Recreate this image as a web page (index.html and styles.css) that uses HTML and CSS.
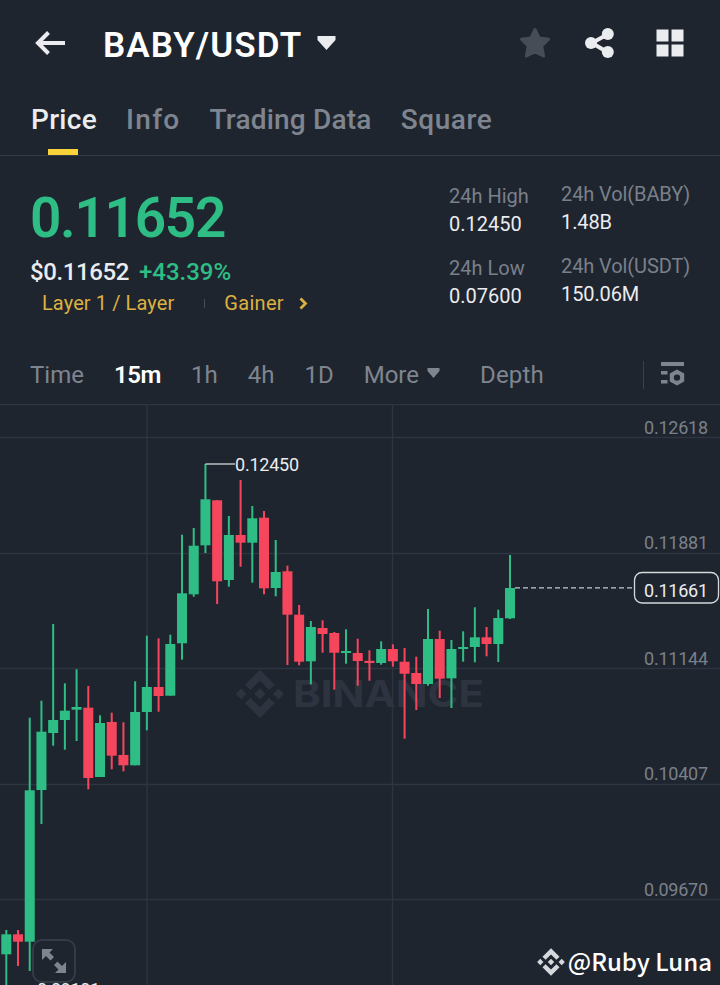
FILE: index.html
```html
<!DOCTYPE html>
<html lang="en">
<head>
    <meta charset="UTF-8">
    <meta name="viewport" content="width=device-width, initial-scale=1.0">
    <title>BABY/USDT</title>
    <link rel="stylesheet" href="styles.css">
</head>
<body>

    <header class="header">
        <svg class="back" width="32" height="26" viewBox="0 0 32 26">
            <path d="M14.5 2.5 L4 13 L14.5 23.5 M4 13 H31" fill="none" stroke="#eaecef" stroke-width="4"/>
        </svg>
        <h1 class="pair">BABY/USDT</h1>
        <svg class="pair-caret" width="19" height="14" viewBox="0 0 19 14">
            <path d="M0.5 0 H18.5 V4 L9.5 14 L0.5 4 Z" fill="#eaecef"/>
        </svg>
        <div class="actions">
            <svg width="32" height="32" viewBox="0 0 32 32">
                <path d="M16 2.5 L20 11 L29.5 12.3 L22.7 19 L24.6 29 L16 25 L7.4 29 L9.3 19 L2.5 12.3 L12 11 Z" fill="#474d57" stroke="#474d57" stroke-width="3" stroke-linejoin="round"/>
            </svg>
            <svg width="30" height="32" viewBox="0 0 30 32">
                <path d="M23 7 L7 16 L23 25.5" fill="none" stroke="#eaecef" stroke-width="4"/>
                <circle cx="22.8" cy="7" r="6" fill="#eaecef"/>
                <circle cx="6" cy="16" r="6" fill="#eaecef"/>
                <circle cx="22.8" cy="25" r="6" fill="#eaecef"/>
            </svg>
            <svg width="28" height="28" viewBox="0 0 28 28">
                <path d="M0.5 0.5 h12 v12 h-12 z M15.5 0.5 h12 v12 h-12 z M0.5 15.5 h12 v12 h-12 z M15.5 15.5 h12 v12 h-12 z" fill="#eaecef"/>
            </svg>
        </div>
    </header>

    <nav class="tabs">
        <div class="tab price active">Price</div>
        <div class="tab info">Info</div>
        <div class="tab trading">Trading Data</div>
        <div class="tab square">Square</div>
    </nav>

    <section class="ticker">
        <div class="ticker-main">
            <div class="last-price">0.11652</div>
            <div class="change-row">
                <span class="usd">$0.11652</span>
                <span class="change">+43.39%</span>
            </div>
            <div class="tags">
                <span>Layer 1 / Layer</span>
                <i class="tag-line"></i>
                <span class="gainer">Gainer</span>
                <svg width="9" height="13" viewBox="0 0 9 13">
                    <path d="M1.5 1.5 L6.5 6.5 L1.5 11.5" fill="none" stroke="#dcb140" stroke-width="2.8"/>
                </svg>
            </div>
        </div>
        <div class="stats stats-price">
            <div class="stat">
                <div class="label">24h High</div>
                <div class="value">0.12450</div>
            </div>
            <div class="stat">
                <div class="label">24h Low</div>
                <div class="value">0.07600</div>
            </div>
        </div>
        <div class="stats stats-volume">
            <div class="stat">
                <div class="label">24h Vol(BABY)</div>
                <div class="value">1.48B</div>
            </div>
            <div class="stat">
                <div class="label">24h Vol(USDT)</div>
                <div class="value">150.06M</div>
            </div>
        </div>
    </section>

    <div class="intervals">
        <span>Time</span>
        <span class="selected">15m</span>
        <span>1h</span>
        <span>4h</span>
        <span>1D</span>
        <span class="more">More
            <svg width="13" height="10" viewBox="0 0 13 10">
                <path d="M0.5 0 H12.5 V3 L6.5 10 L0.5 3 Z" fill="#7f858f"/>
            </svg>
        </span>
        <span class="depth">Depth</span>
        <div class="settings">
            <svg width="26" height="26" viewBox="0 0 26 26">
                <path d="M1 1 H24 V5 H1 Z M1 10 H7.5 V13.5 H1 Z M1 19 H7.5 V22.5 H1 Z" fill="#7f858f"/>
                <path d="M17 8.6 L24.2 12.6 V20.6 L17 24.6 L9.8 20.6 V12.6 Z M17 13.4 A3.2 3.2 0 1 0 17 19.8 A3.2 3.2 0 1 0 17 13.4 Z" fill="#7f858f" fill-rule="evenodd"/>
            </svg>
        </div>
    </div>

    <main class="chart">
        <svg class="plot" width="720" height="581" viewBox="0 404 720 581">
            <g class="grid">
                <path d="M0 404.5 H720 M0 437.5 H720 M0 553.5 H720 M0 668.5 H720 M0 784.5 H720 M0 899.5 H720"/>
                <path d="M147 404 V985 M392.5 404 V985"/>
            </g>

            <g class="watermark">
                <g transform="translate(235.5 669.5) scale(0.387)">
                    <path id="logo" d="M38.7 53.2 L63 28.9 L87.3 53.2 L101.4 39.1 L63 0.7 L24.6 39.1 Z M0.7 63 L14.8 48.9 L28.9 63 L14.8 77.1 Z M38.7 72.8 L63 97.1 L87.3 72.8 L101.4 86.9 L63 125.3 L24.6 86.9 Z M97.1 63 L111.2 48.9 L125.3 63 L111.2 77.1 Z M77.4 63 L63 77.4 L48.6 63 L63 48.6 Z"/>
                </g>
                <text x="293" y="707" textLength="191" lengthAdjust="spacingAndGlyphs">BINANCE</text>
            </g>

            <g id="candles"></g>

            <path class="high-line" d="M205.5 464 H235"/>
            <text class="high-label" x="235" y="471" textLength="64">0.12450</text>
            <text class="high-label" x="37" y="996" textLength="63">0.09101</text>

            <g class="axis">
                <text x="644" y="434" textLength="64">0.12618</text>
                <text x="644" y="549" textLength="64">0.11881</text>
                <text x="644" y="665" textLength="64">0.11144</text>
                <text x="644" y="780" textLength="64">0.10407</text>
                <text x="644" y="896" textLength="64">0.09670</text>
            </g>

            <path class="last-line" d="M515 587.8 H634"/>
            <rect class="last-box" x="634.5" y="572.5" width="84" height="30.5" rx="7.5"/>
            <text class="last-label" x="644" y="597" textLength="64">0.11661</text>
        </svg>

        <div class="expand">
            <svg width="26" height="26" viewBox="0 0 26 26">
                <path d="M1 1 H12 L8.5 4.5 L13 9 L9.5 12.5 L5 8 L1 12 Z M25 25 H14 L17.5 21.5 L13 17 L16.5 13.5 L21 18 L25 14 Z" fill="#7f858f"/>
            </svg>
        </div>

        <div class="author">
            <svg width="28" height="28" viewBox="0 0 126 126">
                <use href="#logo" fill="#d5d8dc"/>
            </svg>
            <span>@Ruby Luna</span>
        </div>
    </main>

    <script>
        // [wick top, body top, body bottom, wick bottom, up]
        const candles = [
            [930, 934.3, 954.3, 990, 1],
            [930, 934.3, 941.7, 966, 0],
            [717.7, 790.3, 941.7, 971, 1],
            [700.7, 731.7, 790, 824, 1],
            [624, 720, 733, 745.7, 1],
            [683.3, 710.7, 720, 749.7, 1],
            [669.3, 707, 709.7, 741, 1],
            [686, 707.7, 778, 789.3, 0],
            [715.3, 723, 777, 777, 1],
            [712.7, 722, 755.7, 769.3, 0],
            [722.3, 755, 765.3, 771.3, 0],
            [681.3, 712, 765.3, 765.3, 1],
            [635.7, 687, 712, 730.3, 1],
            [638.3, 687, 696, 711.7, 0],
            [634.7, 644, 695.7, 695.7, 1],
            [534.7, 593.3, 643.3, 659.7, 1],
            [528, 545.7, 594.3, 596.7, 1],
            [464, 499.3, 545.3, 553, 1],
            [500.3, 500.3, 581.3, 604, 0],
            [516, 535, 580, 586.7, 1],
            [480, 535, 542.7, 566.7, 0],
            [506, 518.3, 542.7, 582.7, 1],
            [511, 517.7, 588.3, 594.3, 0],
            [540, 572, 588, 596.3, 1],
            [565.7, 571.3, 614.7, 665, 0],
            [605, 614.7, 661.7, 665.3, 0],
            [621, 627, 661.3, 684.3, 1],
            [620.3, 628, 634, 652.7, 0],
            [632, 633, 652.7, 689.7, 0],
            [629.3, 651, 653, 663.7, 1],
            [638.7, 653, 661, 685.7, 0],
            [650.3, 660.8, 663, 680.7, 0],
            [641.3, 649, 663, 664.7, 1],
            [644.3, 649, 661.3, 666.7, 0],
            [648, 661.7, 673.7, 738.7, 0],
            [656.7, 673, 684, 710, 0],
            [609, 639, 684, 685.7, 1],
            [630.7, 639, 678.7, 698, 0],
            [640, 649, 678.3, 708, 1],
            [631.3, 647, 649, 661.7, 1],
            [607.3, 637.3, 647, 662.3, 1],
            [627, 637.3, 644, 656.3, 0],
            [609.7, 618, 644, 662, 1],
            [555, 588, 618.3, 619, 1]
        ];

        const step = 11.714;
        let html = '';
        candles.forEach(([high, top, bottom, low, up], i) => {
            const x = 6.3 + i * step;
            html += `
                <g class="${up ? 'up' : 'down'}">
                    <rect x="${x - 1}" y="${high}" width="2" height="${low - high}"/>
                    <rect x="${x - 5}" y="${top}" width="10" height="${bottom - top}"/>
                </g>`;
        });
        document.getElementById('candles').innerHTML = html;
    </script>

</body>
</html>
```
FILE: styles.css
```css
* {
    box-sizing: border-box;
}
body {
    margin: 0;
    width: 720px;
    height: 985px;
    overflow: hidden;
    font-family: Roboto, "Noto Sans", sans-serif;
    background-color: #1f252f;
    color: #eaecef;
}
svg {
    display: block;
    flex-shrink: 0;
}
.header {
    display: flex;
    align-items: center;
    height: 86px;
    padding: 0 36px 0 34px;
}
.pair {
    margin: 0 0 0 37px;
    padding-top: 5px;
    font-size: 35px;
    line-height: 40px;
    font-weight: 600;
    letter-spacing: 1.1px;
    color: #ffffff;
}
.pair-caret {
    margin-left: 15px;
}
.actions {
    display: flex;
    align-items: center;
    gap: 41px;
    margin-left: auto;
}
.actions svg:first-child {
    margin-right: -7px;
}
.tabs {
    display: flex;
    height: 70px;
    padding-left: 31px;
    border-bottom: 1px solid #333b47;
    font-size: 28px;
    font-weight: 500;
    line-height: 67px;
    color: #7f858f;
}
.tab {
    position: relative;
    margin-right: 29px;
}
.tab.active {
    color: #eaecef;
}
.tab.active::after {
    content: "";
    position: absolute;
    left: 17px;
    bottom: 0;
    width: 30px;
    height: 6px;
    background-color: #f8d33a;
}
.price {
    letter-spacing: 0.3px;
}
.info {
    letter-spacing: 1.3px;
}
.trading {
    letter-spacing: 0.2px;
}
.square {
    letter-spacing: 0.6px;
}
.ticker {
    display: flex;
    height: 190px;
}
.ticker-main {
    width: 449px;
    padding: 32px 0 0 30px;
}
.last-price {
    font-size: 55px;
    line-height: 60px;
    font-weight: 600;
    letter-spacing: -1.3px;
    color: #2ebd85;
}
.change-row {
    display: flex;
    gap: 10px;
    margin-top: 10px;
    font-size: 24px;
    line-height: 28px;
    font-weight: 500;
}
.usd {
    letter-spacing: -0.4px;
}
.change {
    color: #2ebd85;
}
.tags {
    display: flex;
    align-items: center;
    margin-top: 5px;
    padding-left: 12px;
    font-size: 20px;
    line-height: 24px;
    letter-spacing: 0.1px;
    color: #dcb140;
}
.tag-line {
    width: 1px;
    height: 9px;
    margin: 0 19px 0 30px;
    background-color: #474d57;
}
.gainer {
    margin-right: 15px;
    letter-spacing: 0.3px;
}
.stats {
    font-size: 20px;
    line-height: 24px;
}
.stats-price {
    width: 112px;
    padding-top: 28px;
}
.stats-volume {
    padding-top: 26px;
    letter-spacing: -0.1px;
}
.stat {
    height: 72px;
}
.label {
    margin-bottom: 4px;
    color: #7a808a;
}
.intervals {
    display: flex;
    align-items: center;
    height: 58px;
    padding-left: 30px;
    gap: 30px;
    font-size: 24px;
    line-height: 28px;
    color: #7f858f;
}
.selected {
    color: #ffffff;
    font-weight: 600;
    letter-spacing: -0.4px;
}
.more {
    display: flex;
    align-items: center;
    gap: 8px;
}
.more svg {
    margin-bottom: 4px;
}
.depth {
    margin-left: 10px;
    letter-spacing: 0.2px;
}
.settings {
    margin-left: auto;
    padding: 0 0 2px 16px;
    margin-right: 34px;
    border-left: 1px solid #3a414c;
}
.chart {
    position: relative;
    height: 581px;
}
.grid path {
    fill: none;
    stroke: #2e3540;
    stroke-width: 1.3;
}
.watermark {
    fill: #2d343f;
    font-family: Inter, sans-serif;
    font-size: 37px;
    font-weight: 700;
}
.up {
    fill: #2ebd85;
}
.down {
    fill: #f6465d;
}
.high-line {
    stroke: #d5d8dc;
    stroke-width: 1.3;
}
.high-label, .last-label {
    font-size: 18px;
    fill: #eaecef;
}
.axis {
    font-size: 18px;
    fill: #7a808a;
}
.last-line {
    stroke: #c5c9cf;
    stroke-width: 1.3;
    stroke-dasharray: 5 3;
}
.last-box {
    fill: #1f252f;
    stroke: #d5d8dc;
    stroke-width: 1.3;
}
.expand {
    position: absolute;
    left: 32px;
    top: 535px;
    display: flex;
    align-items: center;
    justify-content: center;
    width: 44px;
    height: 44px;
    border: 2px solid #343b46;
    border-radius: 10px;
}
.author {
    position: absolute;
    right: 8px;
    bottom: 6px;
    display: flex;
    align-items: center;
    gap: 3px;
    font-family: "Noto Sans CJK SC", sans-serif;
    font-size: 24px;
    line-height: 36px;
    font-weight: 500;
    color: #ffffff;
}
.author span {
    margin-top: -2px;
}
```
